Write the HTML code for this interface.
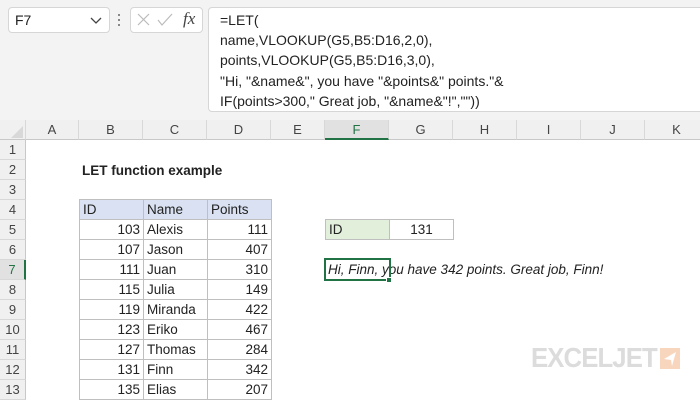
<!DOCTYPE html>
<html><head><meta charset="utf-8"><style>
*{margin:0;padding:0;box-sizing:border-box}
body{width:700px;height:400px;overflow:hidden;background:#fff;font-family:"Liberation Sans",sans-serif;position:relative;font-size:13px;color:#222}
.a{position:absolute}
.top{left:0;top:0;width:700px;height:120px;background:#f3f3f3}
.box{background:#fff;border:1px solid #d6d6d6;border-radius:4px}
.colh{top:120px;height:20px;background:#f0f0f0;border-bottom:1px solid #c8c8c8;border-right:1px solid #d8d8d8;text-align:center;line-height:20px;color:#444;font-size:13px}
.rowh{left:0;width:26px;height:20px;background:#f0f0f0;border-bottom:1px solid #d8d8d8;border-right:1px solid #c8c8c8;text-align:center;line-height:20px;color:#444;font-size:13px}
.g{position:absolute;height:21px;line-height:20px;font-size:13.5px;padding:0 3px;white-space:nowrap;border:1px solid #bfbfbf}
.r{text-align:right}
</style></head><body>
<div class="a top"></div>
<div class="a box" style="left:8px;top:7px;width:102px;height:26px"></div>
<div class="a" style="left:15px;top:12px;font-size:14px">F7</div>
<svg class="a" style="left:90px;top:15px" width="12" height="10"><path d="M1 3 L6 8 L11 3" stroke="#444" stroke-width="1.3" fill="none"/></svg>
<div class="a" style="left:118px;top:14px;width:2px;height:2px;background:#888;box-shadow:0 5px #888,0 10px #888"></div>
<div class="a box" style="left:130px;top:7px;width:73px;height:26px"></div>
<svg class="a" style="left:136px;top:13px" width="40" height="14"><path d="M2 1 L13 12 M13 1 L2 12" stroke="#bbb" stroke-width="1.2"/><path d="M22 7 L26 12 L36 1" stroke="#bbb" stroke-width="1.2" fill="none"/></svg>
<div class="a" style="left:183px;top:9px;font-family:'Liberation Serif',serif;font-style:italic;font-size:17px;color:#444">fx</div>
<div class="a box" style="left:208px;top:7px;width:500px;height:105px"></div>
<div class="a" style="left:220px;top:10px;font-size:14px;line-height:20.2px;color:#222">=LET(<br>name,VLOOKUP(G5,B5:D16,2,0),<br>points,VLOOKUP(G5,B5:D16,3,0),<br>"Hi, "&amp;name&amp;", you have "&amp;points&amp;" points."&amp;<br>IF(points&gt;300," Great job, "&amp;name&amp;"!",""))</div>

<div class="a colh" style="left:0;width:26px"></div>
<svg class="a" style="left:10px;top:125px" width="14" height="14"><path d="M13 1 L13 13 L1 13Z" fill="#d8d8d8"/></svg>
<div class="a colh" style="left:26px;width:53px">A</div>
<div class="a colh" style="left:79px;width:64px">B</div>
<div class="a colh" style="left:143px;width:64px">C</div>
<div class="a colh" style="left:207px;width:64px">D</div>
<div class="a colh" style="left:271px;width:54px">E</div>
<div class="a colh" style="left:325px;width:64px;background:#e1e1e1;border-bottom:2px solid #217346;color:#217346">F</div>
<div class="a colh" style="left:389px;width:64px">G</div>
<div class="a colh" style="left:453px;width:64px">H</div>
<div class="a colh" style="left:517px;width:64px">I</div>
<div class="a colh" style="left:581px;width:64px">J</div>
<div class="a colh" style="left:645px;width:64px">K</div>

<div class="a rowh" style="top:140px">1</div>
<div class="a rowh" style="top:160px">2</div>
<div class="a rowh" style="top:180px">3</div>
<div class="a rowh" style="top:200px">4</div>
<div class="a rowh" style="top:220px">5</div>
<div class="a rowh" style="top:240px">6</div>
<div class="a rowh" style="top:260px;background:#e1e1e1;border-right:2px solid #217346;color:#217346">7</div>
<div class="a rowh" style="top:280px">8</div>
<div class="a rowh" style="top:300px">9</div>
<div class="a rowh" style="top:320px">10</div>
<div class="a rowh" style="top:340px">11</div>
<div class="a rowh" style="top:360px">12</div>
<div class="a rowh" style="top:380px">13</div>

<div class="a" style="left:82px;top:161px;font-weight:bold;font-size:13.5px;line-height:20px">LET function example</div>

<div class="g" style="left:79px;top:199px;width:65px;background:#d9e1f2">ID</div>
<div class="g" style="left:143px;top:199px;width:65px;background:#d9e1f2">Name</div>
<div class="g" style="left:207px;top:199px;width:65px;background:#d9e1f2">Points</div>

<div class="g r" style="left:79px;top:219px;width:65px">103</div><div class="g" style="left:143px;top:219px;width:65px">Alexis</div><div class="g r" style="left:207px;top:219px;width:65px">111</div>
<div class="g r" style="left:79px;top:239px;width:65px">107</div><div class="g" style="left:143px;top:239px;width:65px">Jason</div><div class="g r" style="left:207px;top:239px;width:65px">407</div>
<div class="g r" style="left:79px;top:259px;width:65px">111</div><div class="g" style="left:143px;top:259px;width:65px">Juan</div><div class="g r" style="left:207px;top:259px;width:65px">310</div>
<div class="g r" style="left:79px;top:279px;width:65px">115</div><div class="g" style="left:143px;top:279px;width:65px">Julia</div><div class="g r" style="left:207px;top:279px;width:65px">149</div>
<div class="g r" style="left:79px;top:299px;width:65px">119</div><div class="g" style="left:143px;top:299px;width:65px">Miranda</div><div class="g r" style="left:207px;top:299px;width:65px">422</div>
<div class="g r" style="left:79px;top:319px;width:65px">123</div><div class="g" style="left:143px;top:319px;width:65px">Eriko</div><div class="g r" style="left:207px;top:319px;width:65px">467</div>
<div class="g r" style="left:79px;top:339px;width:65px">127</div><div class="g" style="left:143px;top:339px;width:65px">Thomas</div><div class="g r" style="left:207px;top:339px;width:65px">284</div>
<div class="g r" style="left:79px;top:359px;width:65px">131</div><div class="g" style="left:143px;top:359px;width:65px">Finn</div><div class="g r" style="left:207px;top:359px;width:65px">342</div>
<div class="g r" style="left:79px;top:379px;width:65px">135</div><div class="g" style="left:143px;top:379px;width:65px">Elias</div><div class="g r" style="left:207px;top:379px;width:65px">207</div>

<div class="g" style="left:325px;top:219px;width:65px;background:#e2efda">ID</div>
<div class="g" style="left:389px;top:219px;width:65px;text-align:center">131</div>

<div class="a" style="left:328px;top:260px;line-height:20px;font-style:italic;font-size:13.5px;white-space:nowrap">Hi, Finn, you have 342 points. Great job, Finn!</div>
<div class="a" style="left:324px;top:258px;width:67px;height:23px;border:2px solid #217346"></div>
<div class="a" style="left:386px;top:277px;width:6px;height:6px;background:#217346;border:1px solid #fff"></div>

<div class="a" style="left:531px;top:343px;font-weight:bold;font-size:28px;color:#dcdcdc;letter-spacing:-1px;transform:scaleX(0.92);transform-origin:left;line-height:30px">EXCELJET</div>
<div class="a" style="left:660px;top:348px;width:20px;height:21px;background:#f8d6be"></div>
<svg class="a" style="left:660px;top:348px" width="20" height="21"><path d="M16 4 L4 11 L11 12 L12 18Z" fill="#fff"/></svg>
</body></html>
